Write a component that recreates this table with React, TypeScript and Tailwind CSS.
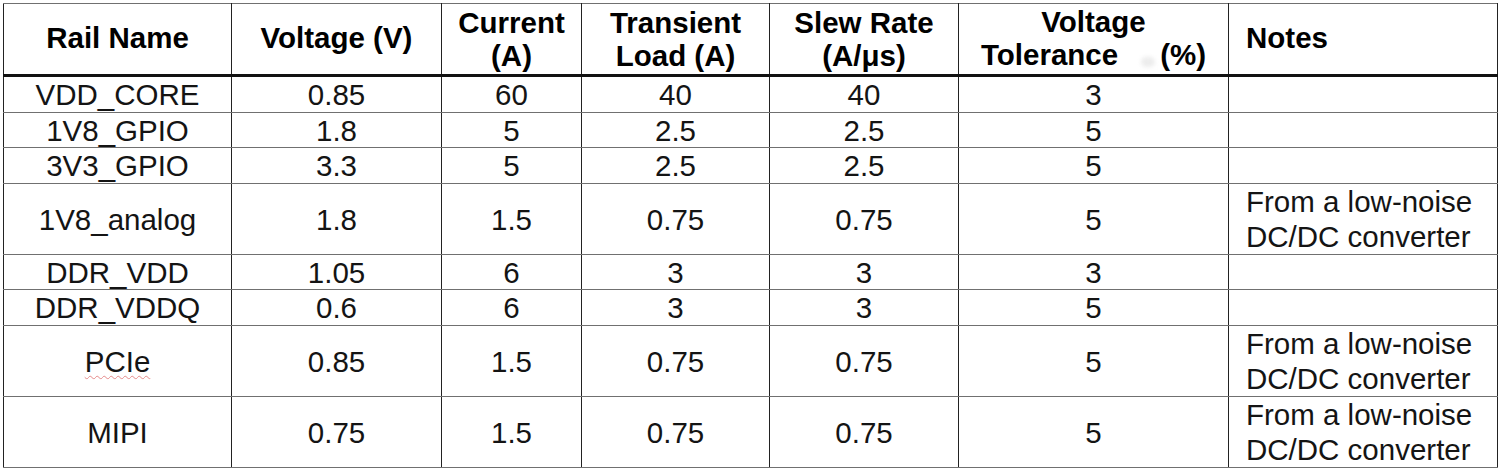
const rows = [
  { name: 'VDD_CORE', v: '0.85', i: '60', t: '40', s: '40', tol: '3', note: '', h: 'h-[37px]' },
  { name: '1V8_GPIO', v: '1.8', i: '5', t: '2.5', s: '2.5', tol: '5', note: '', h: 'h-[35px]' },
  { name: '3V3_GPIO', v: '3.3', i: '5', t: '2.5', s: '2.5', tol: '5', note: '', h: 'h-[36px]' },
  { name: '1V8_analog', v: '1.8', i: '1.5', t: '0.75', s: '0.75', tol: '5', note: 'low', h: 'h-[71px]' },
  { name: 'DDR_VDD', v: '1.05', i: '6', t: '3', s: '3', tol: '3', note: '', h: 'h-[35px]' },
  { name: 'DDR_VDDQ', v: '0.6', i: '6', t: '3', s: '3', tol: '5', note: '', h: 'h-[36px]' },
  { name: 'PCIe', v: '0.85', i: '1.5', t: '0.75', s: '0.75', tol: '5', note: 'low', h: 'h-[71px]', spell: true },
  { name: 'MIPI', v: '0.75', i: '1.5', t: '0.75', s: '0.75', tol: '5', note: 'low', h: 'h-[70px]' },
];

const td = 'border-x border-x-[#222] border-y border-y-[#707070] text-center align-middle p-0';
const th = `${td} border-b-[3px] border-b-[#111]`;

export default function App() {
  return (
    <div className="w-[1500px] h-[470px] bg-white pt-[3px] pl-[3px] text-[#141414]" style={{ fontFamily: '"Liberation Sans", Arial, sans-serif' }}>
      <table className="table-fixed border-collapse w-[1494px] text-[29.5px] leading-[33px]">
        <colgroup>
          <col className="w-[228px]" />
          <col className="w-[210px]" />
          <col className="w-[140px]" />
          <col className="w-[188px]" />
          <col className="w-[189px]" />
          <col className="w-[270px]" />
          <col className="w-[269px]" />
        </colgroup>
        <thead>
          <tr className="h-[72px] font-bold text-black">
            <th className={`${th} pb-[4px]`}>Rail Name</th>
            <th className={`${th} pb-[4px]`}>Voltage (V)</th>
            <th className={th}>
              Current
              <br />
              (A)
            </th>
            <th className={th}>
              Transient
              <br />
              Load (A)
            </th>
            <th className={th}>
              Slew Rate
              <br />
              (A/μs)
            </th>
            <th className={th}>
              Voltage
              <br />
              Tolerance
              <span className="inline-block w-[42px] align-middle">
                <span className="inline-block w-[14px] h-[10px] ml-[18px] rounded-full bg-[#ececec] blur-[2px]" />
              </span>
              (%)
            </th>
            <th className={`${th} text-left pl-[17px] pb-[4px]`}>Notes</th>
          </tr>
        </thead>
        <tbody>
          {rows.map((r) => (
            <tr key={r.name} className={r.h}>
              <td className={td}>
                {r.spell ? (
                  <span className="underline decoration-wavy decoration-[#e58a8a] decoration-1 underline-offset-[3px]">{r.name}</span>
                ) : (
                  r.name
                )}
              </td>
              <td className={td}>{r.v}</td>
              <td className={td}>{r.i}</td>
              <td className={td}>{r.t}</td>
              <td className={td}>{r.s}</td>
              <td className={td}>{r.tol}</td>
              <td className={`${td} text-left pl-[17px] leading-[35px]`}>
                {r.note && (
                  <>
                    From a low-noise
                    <br />
                    DC/DC converter
                  </>
                )}
              </td>
            </tr>
          ))}
        </tbody>
      </table>
    </div>
  );
}
